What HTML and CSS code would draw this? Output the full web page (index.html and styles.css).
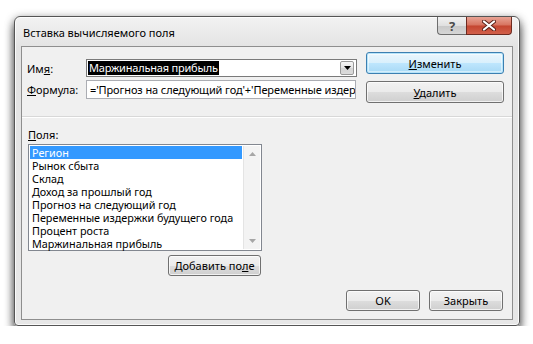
FILE: index.html
```html
<!DOCTYPE html>
<html>
<head>
<meta charset="utf-8">
<link rel="stylesheet" href="styles.css">
</head>
<body>
<div class="window">
  <div class="titlebar">
    <span class="title">Вставка вычисляемого поля</span>
    <div class="caption-btns">
      <div class="cap help">?</div>
      <div class="cap close">
        <svg width="14" height="11" viewBox="0 0 14 11">
          <path d="M2 1.5 L12 9.5 M12 1.5 L2 9.5" stroke="#5a2018" stroke-width="4" stroke-linecap="round"/>
          <path d="M2 1.5 L12 9.5 M12 1.5 L2 9.5" stroke="#ffffff" stroke-width="2.2" stroke-linecap="round"/>
        </svg>
      </div>
    </div>
  </div>
  <div class="client">
    <div class="top">
      <div class="fields">
        <div class="row">
          <span class="lbl">Им<u>я</u>:</span>
          <div class="combo">
            <span class="sel">Маржинальная прибыль</span>
            <div class="drop"><svg width="7" height="4" viewBox="0 0 7 4"><path d="M0 0 H7 L3.5 4 Z" fill="#000"/></svg></div>
          </div>
        </div>
        <div class="row">
          <span class="lbl"><u>Ф</u>ормула:</span>
          <div class="input">='Прогноз на следующий год'+'Переменные издержки будущего года'</div>
        </div>
      </div>
      <div class="btncol">
        <div class="btn wide default"><span><u>И</u>зменить</span></div>
        <div class="btn wide"><span><u>У</u>далить</span></div>
      </div>
    </div>
    <div class="sep"></div>
    <div class="lower">
      <div class="flabel"><u>П</u>оля:</div>
      <div class="listbox">
        <div class="items">
          <div class="item selected">Регион</div>
          <div class="item">Рынок сбыта</div>
          <div class="item">Склад</div>
          <div class="item">Доход за прошлый год</div>
          <div class="item">Прогноз на следующий год</div>
          <div class="item">Переменные издержки будущего года</div>
          <div class="item">Процент роста</div>
          <div class="item">Маржинальная прибыль</div>
        </div>
        <div class="scroll">
          <svg width="7" height="4" viewBox="0 0 7 4"><path d="M0 4 H7 L3.5 0 Z" fill="#a6a6a6"/></svg>
          <svg width="7" height="4" viewBox="0 0 7 4"><path d="M0 0 H7 L3.5 4 Z" fill="#a6a6a6"/></svg>
        </div>
      </div>
      <div class="addrow">
        <div class="btn add"><span>Добавить по<u>л</u>е</span></div>
      </div>
    </div>
    <div class="footer">
      <div class="btn small"><span>OK</span></div>
      <div class="btn small"><span>Закрыть</span></div>
    </div>
  </div>
</div>
</body>
</html>
```

FILE: styles.css
```css
* { box-sizing: border-box; }
html, body { margin: 0; padding: 0; background: #ffffff; }
body {
  font-family: "Noto Sans", "Open Sans", sans-serif;
  font-size: 11px;
  color: #000;
  overflow: hidden;
}
u { text-decoration: underline; text-underline-offset: 1px; }

.window {
  margin: 16px 0 0 14px;
  width: 506px;
  height: 310px;
  border: 1px solid #555555;
  border-radius: 6px 6px 4px 4px;
  background: linear-gradient(#f2f2f2, #e3e3e3 30px, #e7e7e7);
  box-shadow: 0 7px 10px rgba(0,0,0,0.6), 0 2px 10px rgba(0,0,0,0.4), inset 0 0 0 1px rgba(255,255,255,0.8);
  padding: 0 6px 5px 6px;
  display: flex;
  flex-direction: column;
}

.titlebar {
  height: 29px;
  display: flex;
  justify-content: space-between;
  align-items: flex-start;
}
.title {
  padding: 8px 0 0 2px;
  font-size: 11px;
  line-height: 15px;
  color: #000;
}
.caption-btns {
  display: flex;
  margin-right: 1px;
}
.cap {
  height: 18px;
  display: flex;
  align-items: center;
  justify-content: center;
  border: 1px solid #6d6d6d;
  border-top: none;
}
.help {
  width: 29px;
  border-radius: 0 0 0 4px;
  border-right: none;
  background: linear-gradient(#f2f2f2, #e0e0e0 50%, #c8c8c8 51%, #d6d6d6);
  color: #4a4a4a;
  font-size: 13px;
  font-weight: bold;
  line-height: 16px;
}
.close {
  width: 46px;
  border-color: #6d2a20;
  border-radius: 0 0 4px 0;
  background: linear-gradient(#e8a394, #d7735f 48%, #c44530 52%, #d2604a);
}

.client {
  flex: 1;
  border: 1px solid #8e8e8e;
  background: #f0f0f0;
  display: flex;
  flex-direction: column;
}

.top {
  display: flex;
  padding: 5px 0 0 5px;
}
.fields {
  margin-top: 7px;
  display: flex;
  flex-direction: column;
  gap: 3px;
}
.row {
  display: flex;
  align-items: center;
}
.lbl {
  width: 59px;
  line-height: 15px;
}
.combo {
  width: 271px;
  height: 18px;
  border: 1px solid #7a7a7a;
  background: #fff;
  display: flex;
  align-items: center;
  padding: 0 2px 0 1px;
  justify-content: space-between;
}
.sel {
  flex: none;
  background: #000;
  color: #fff;
  line-height: 14px;
  padding: 0 1px 0 1px;
  letter-spacing: -0.2px;
}
.drop {
  width: 14px;
  height: 14px;
  border: 1px solid #9a9a9a;
  border-radius: 2px;
  background: linear-gradient(#f6f6f6, #e4e4e4 50%, #d4d4d4 51%, #dcdcdc);
  display: flex;
  align-items: center;
  justify-content: center;
}
.input {
  width: 270px;
  height: 19px;
  border: 1px solid #abadb3;
  background: #fff;
  line-height: 17px;
  padding: 0 3px;
  white-space: nowrap;
  overflow: hidden;
  letter-spacing: -0.1px;
}

.btncol {
  margin-left: 9px;
  display: flex;
  flex-direction: column;
  gap: 7px;
}
.btn {
  height: 22px;
  border: 1px solid #707070;
  border-radius: 3px;
  background: linear-gradient(#f2f2f2, #ebebeb 50%, #dddddd 51%, #cfcfcf);
  box-shadow: inset 0 0 0 1px rgba(255,255,255,0.7);
  display: flex;
  align-items: center;
  justify-content: center;
  line-height: 15px;
}
.wide { width: 138px; }
.default {
  border-color: #3c7fb1;
  box-shadow: inset 0 0 0 1px #b6e4fa, inset 0 0 0 2px rgba(255,255,255,0.5);
  background: linear-gradient(#eaf6fd, #d9f0fc 50%, #bee6fd 51%, #a7d9f5);
}

.sep {
  margin-top: 13px;
  height: 2px;
  border-top: 1px solid #d8d8d8;
  border-bottom: 1px solid #ffffff;
}

.lower {
  padding: 9px 0 0 6px;
  width: 241px;
  display: flex;
  flex-direction: column;
}
.flabel {
  line-height: 15px;
}
.listbox {
  margin-top: 2px;
  width: 234px;
  height: 107px;
  border: 1px solid #828790;
  background: #fff;
  display: flex;
  padding: 1px;
}
.items {
  flex: 1;
  display: flex;
  flex-direction: column;
  padding-right: 1px;
}
.item {
  height: 13px;
  line-height: 13px;
  padding-left: 2px;
  white-space: nowrap;
  font-size: 10.8px;
}
.selected {
  background: #3399ff;
  color: #fff;
}
.scroll {
  width: 17px;
  background: #f3f3f3;
  border-left: 1px solid #e4e4e4;
  display: flex;
  flex-direction: column;
  justify-content: space-between;
  align-items: center;
  padding: 6px 0 6px 0;
}

.addrow {
  display: flex;
  justify-content: flex-end;
  margin-top: 4px;
  padding-right: 2px;
}
.add { width: 93px; height: 21px; }

.footer {
  display: flex;
  justify-content: flex-end;
  gap: 9px;
  padding-right: 9px;
  margin-top: 14px;
}
.small { width: 74px; height: 21px; }
```
